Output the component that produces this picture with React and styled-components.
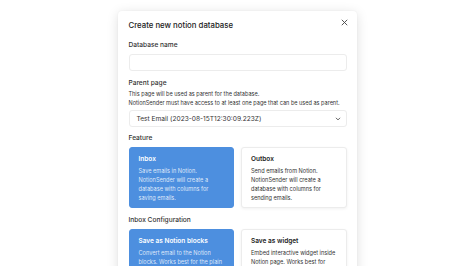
import React from "react";
import styled, { createGlobalStyle } from "styled-components";

const Global = createGlobalStyle`
  html, body { margin: 0; padding: 0; background: #fff; overflow: hidden; }
  body { font-family: Inter, "Noto Sans", sans-serif; color: #1f2328; }
`;

const Page = styled.div`
  display: flex;
  justify-content: center;
  align-items: flex-start;
  padding-top: 11px;
`;

const Modal = styled.div`
  position: relative;
  flex-shrink: 0;
  width: 239px;
  background: #fff;
  border-radius: 4px;
  box-shadow: 0 2px 12px rgba(0, 0, 0, 0.13), 0 0 2px rgba(0,0,0,0.06);
  padding: 8px 10px 20px 11px;
  box-sizing: border-box;
  display: flex;
  flex-direction: column;
  & > * { flex-shrink: 0; }
`;

const Title = styled.h1`
  margin: 0;
  font-size: 7.8px;
  font-weight: 500;
  line-height: 12px;
  color: #222;
`;

const Close = styled.button`
  position: absolute;
  top: 6px;
  right: 7px;
  border: 0;
  background: none;
  padding: 0;
  width: 10px;
  height: 10px;
  display: flex;
  align-items: center;
  justify-content: center;
`;

const Label = styled.div`
  font-size: 6.6px;
  font-weight: 500;
  color: #333;
  line-height: 10px;
  margin-top: ${(p) => p.$mt || 0}px;
`;

const Input = styled.div`
  margin-top: 4px;
  height: 17px;
  border: 1px solid #ececec;
  border-radius: 3px;
  box-sizing: border-box;
`;

const Help = styled.div`
  margin-top: 2px;
  font-size: 5.55px;
  line-height: 9px;
  color: #333;
`;

const Select = styled.div`
  margin-top: 2px;
  height: 17px;
  border: 1px solid #ececec;
  border-radius: 3px;
  box-sizing: border-box;
  display: flex;
  align-items: center;
  justify-content: space-between;
  padding: 0 5px 0 7px;
  font-size: 6.6px;
  color: #333;
`;

const Cards = styled.div`
  margin-top: 4px;
  display: grid;
  grid-template-columns: 1fr 1fr;
  gap: 7px;
`;

const Card = styled.div`
  height: 61px;
  box-sizing: border-box;
  border-radius: 3px;
  padding: 7px 9px;
  background: ${(p) => (p.$active ? "#4d8fdf" : "#fff")};
  border: 1px solid ${(p) => (p.$active ? "#4d8fdf" : "#ececec")};
  box-shadow: ${(p) => (p.$active ? "none" : "0 1px 3px rgba(0,0,0,0.06)")};
  color: ${(p) => (p.$active ? "#fff" : "#222")};
`;

const CardTitle = styled.div`
  font-size: 6.5px;
  font-weight: 600;
  line-height: 9px;
`;

const CardText = styled.div`
  margin-top: 3px;
  font-size: 5.6px;
  line-height: 9px;
  color: ${(p) => (p.$active ? "rgba(255,255,255,0.82)" : "#333")};
`;

export default function App() {
  return (
    <>
      <Global />
      <Page>
        <Modal>
          <Close aria-label="Close">
            <svg width="7" height="7" viewBox="0 0 10 10">
              <path d="M1.5 1.5 L8.5 8.5 M8.5 1.5 L1.5 8.5" stroke="#444" strokeWidth="1.3" strokeLinecap="round" />
            </svg>
          </Close>
          <Title>Create new notion database</Title>
          <Label $mt={9}>Database name</Label>
          <Input />
          <Label $mt={7}>Parent page</Label>
          <Help>
            This page will be used as parent for the database.
            <br />
            NotionSender must have access to at least one page that can be used as parent.
          </Help>
          <Select>
            <span>Test Email (2023-08-15T12:30:09.223Z)</span>
            <svg width="6" height="6" viewBox="0 0 10 10">
              <path d="M2 3.5 L5 6.5 L8 3.5" stroke="#444" strokeWidth="1.4" fill="none" strokeLinecap="round" strokeLinejoin="round" />
            </svg>
          </Select>
          <Label $mt={6}>Feature</Label>
          <Cards>
            <Card $active>
              <CardTitle>Inbox</CardTitle>
              <CardText $active>
                Save emails in Notion. NotionSender will create a database with columns for saving emails.
              </CardText>
            </Card>
            <Card>
              <CardTitle>Outbox</CardTitle>
              <CardText>
                Send emails from Notion. NotionSender will create a database with columns for sending emails.
              </CardText>
            </Card>
          </Cards>
          <Label $mt={7}>Inbox Configuration</Label>
          <Cards>
            <Card $active>
              <CardTitle>Save as Notion blocks</CardTitle>
              <CardText $active>
                Convert email to the Notion blocks. Works best for the plain text emails.
              </CardText>
            </Card>
            <Card>
              <CardTitle>Save as widget</CardTitle>
              <CardText>
                Embed interactive widget inside Notion page. Works best for HTML emails.
              </CardText>
            </Card>
          </Cards>
        </Modal>
      </Page>
    </>
  );
}
